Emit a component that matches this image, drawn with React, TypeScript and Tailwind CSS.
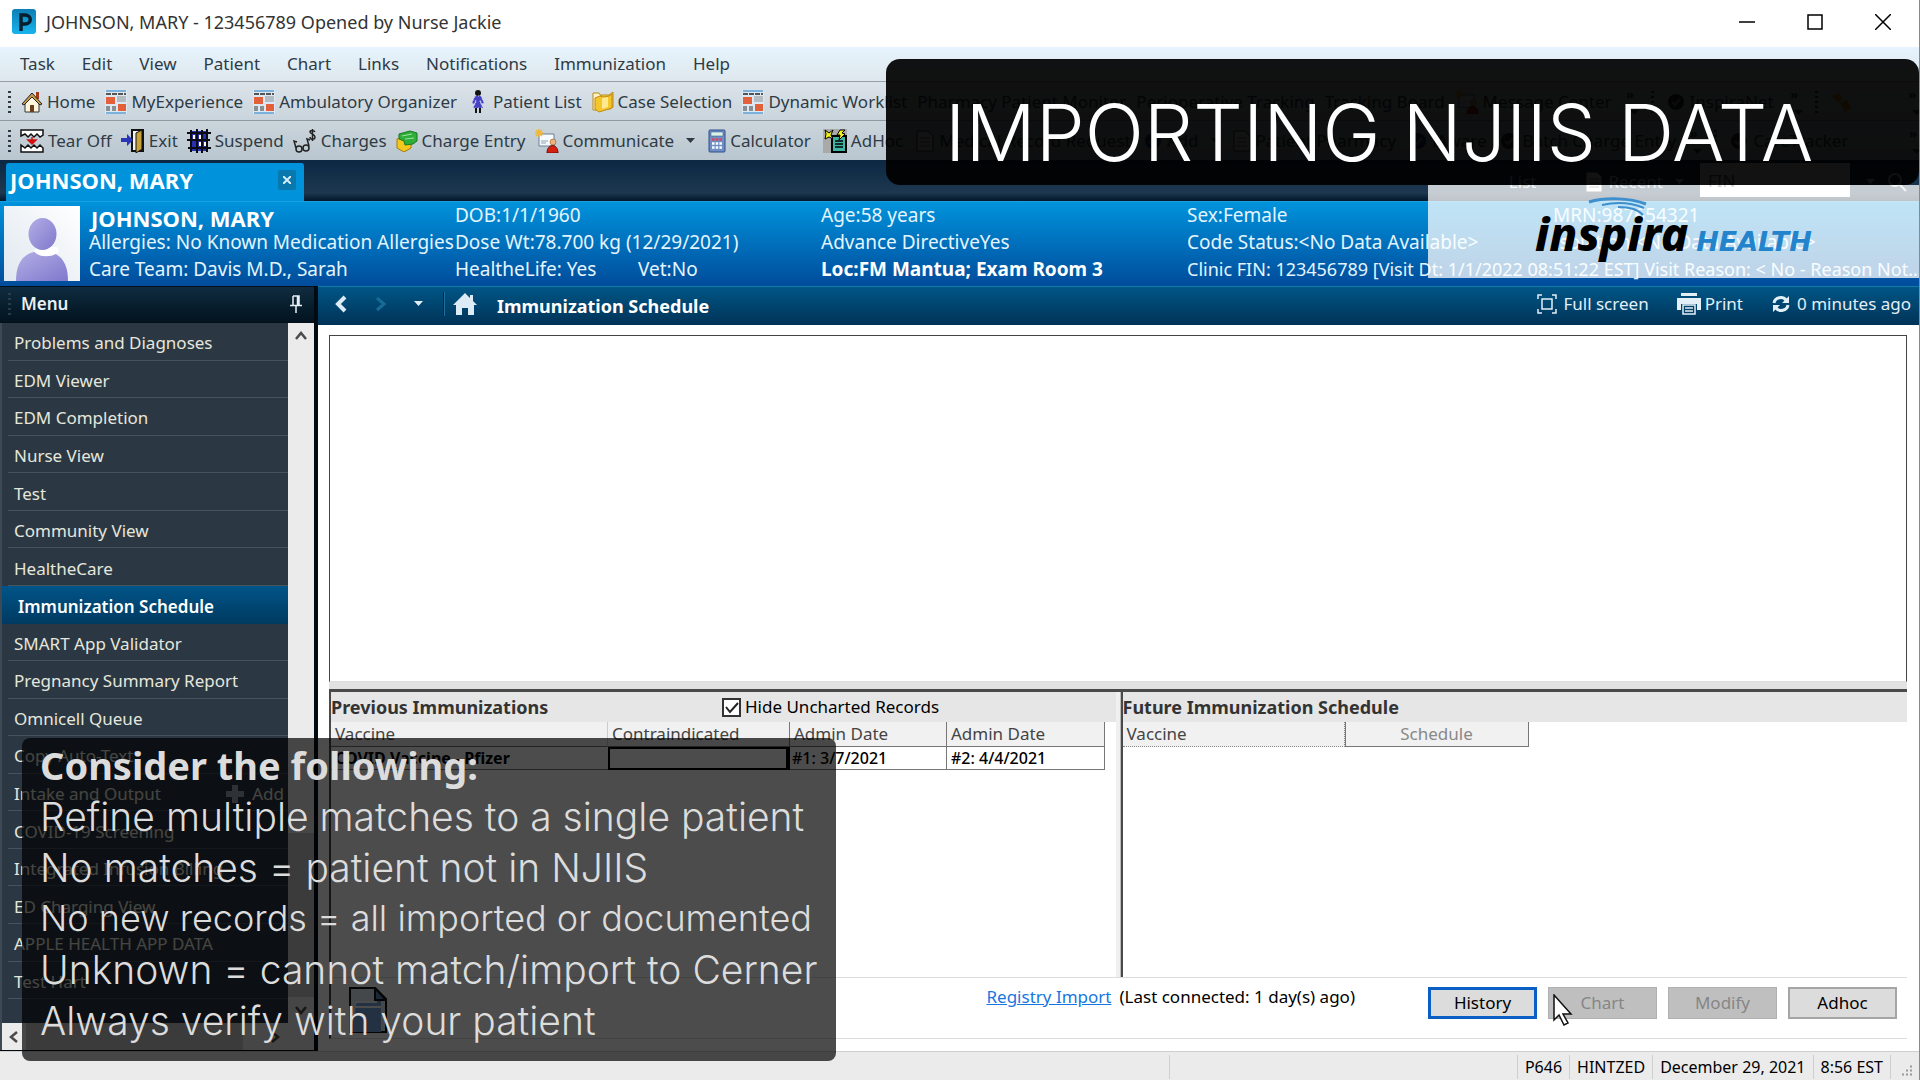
import React, { useState } from "react";

const menus = ["Task", "Edit", "View", "Patient", "Chart", "Links", "Notifications", "Immunization", "Help"];

const sideItems = [
  "Problems and Diagnoses",
  "EDM Viewer",
  "EDM Completion",
  "Nurse View",
  "Test",
  "Community View",
  "HealtheCare",
  "Immunization Schedule",
  "SMART App Validator",
  "Pregnancy Summary Report",
  "Omnicell Queue",
  "Copy Auto-Text",
  "Intake and Output",
  "COVID-19 Screening",
  "Integrated Infusion Billing",
  "ED Charging View",
  "APPLE HEALTH APP DATA",
  "Test Hart",
];

const notes = [
  { text: "Refine multiple matches to a single patient", size: "text-[39px]" },
  { text: "No matches = patient not in NJIIS", size: "text-[39px]" },
  { text: "No new records = all imported or documented", size: "text-[36px]" },
  { text: "Unknown = cannot match/import to Cerner", size: "text-[39px]" },
  { text: "Always verify with your patient", size: "text-[39px]" },
];

const HomeIcon = () => (
  <svg width="22" height="22" viewBox="0 0 22 22">
    <path d="M15 1h3v7h-3z" fill="#a33a1c" />
    <path d="M4 11 11 4l7 7v10H4z" fill="#fdf6dc" stroke="#333" />
    <path d="M1 13 11 2l10 11-2 1-8-8-8 8z" fill="#c99a4a" stroke="#222" strokeWidth="1" />
    <path d="M9 14h4v7H9z" fill="#6b3f1d" />
  </svg>
);

const NewsIcon = () => (
  <svg width="22" height="24" viewBox="0 0 22 24">
    <path d="M0 0h22v24H0z" fill="#dce9f2" />
    <path d="M1 1h20M1 23h20" stroke="#5aa0d6" strokeWidth="1.5" />
    <path d="M1 4h20" stroke="#555" strokeWidth="2" strokeDasharray="5 1" />
    <path d="M1 7h9v7H1zM13 14h8v7h-8z" fill="#e2603a" />
    <path d="M12 7h9M12 9h9M12 11h9" stroke="#8a8f94" />
    <path d="M1 16h4v5H1zM7 16h4v5H7z" fill="#8a8f94" />
  </svg>
);

const PersonIcon = () => (
  <svg width="22" height="24" viewBox="0 0 22 24">
    <circle cx="11" cy="3" r="3" fill="#111" />
    <path d="M8 6h6l3 7-2 1-2-4v2l3 6H6l3-6v-2l-2 4-2-1z" fill="#4543c4" stroke="#c9ccf5" strokeDasharray="1 2" />
    <path d="M9 18v5M13 18v5" stroke="#111" strokeWidth="2" />
  </svg>
);

const FolderIcon = () => (
  <svg width="22" height="22" viewBox="0 0 22 22">
    <path d="M1 2h6l2 3v14H1z" fill="#fff3c4" stroke="#b98a12" />
    <path d="M9 4h8l4-3v15l-3 2H9z" fill="#f7d75a" stroke="#b98a12" />
    <path d="M3 18 7 21 20 17V3l-3 2-6 1-3-1-5 2z" fill="#f5c52c" stroke="#c28b10" />
    <path d="M10 7l6-1v10l-6 2z" fill="#ffe98f" />
  </svg>
);

const TearIcon = () => (
  <svg width="24" height="24" viewBox="0 0 24 24">
    <path d="M1 1h22v5l-3 2-3-3-3 3-3-3-3 3-3-3-4 2zM1 23h22v-4l-3-3-3 3-3-3-3 3-3-3-3 3-4-3z" fill="#fff" stroke="#111" strokeWidth="1.5" />
    <path d="M12 8v3M8 11h8l-4 4z" stroke="#d01010" strokeWidth="1.5" fill="#d01010" />
  </svg>
);

const ExitIcon = () => (
  <svg width="24" height="24" viewBox="0 0 24 24">
    <path d="M11 1h11v21H11z" fill="#f2f2f2" stroke="#111" strokeWidth="2" />
    <path d="M15 4l6-3v19l-6 4z" fill="#c9a23a" stroke="#111" />
    <path d="M0 9h6V5l6 6-6 6v-4H0z" fill="#2a35b8" />
  </svg>
);

const GridIcon = () => (
  <svg width="24" height="24" viewBox="0 0 24 24">
    <path d="M5 2h14v20H5z" fill="#2a2fae" />
    <path d="M7 6v4M13 6v4M13 13v4M18 13v4" stroke="#fff" strokeWidth="2" />
    <path d="M4 1v22M10 0v24M15 1v23M20 0v23M0 4h24M0 11h23M1 19h23" stroke="#0b0b14" strokeWidth="2" />
  </svg>
);

const ChargesIcon = () => (
  <svg width="24" height="24" viewBox="0 0 24 24" fill="none" stroke="#222" strokeWidth="1.5">
    <path d="M22 3c-1-2-5-2-5 0s5 2 5 5-5 3-5 0M19.5 0v12" />
    <circle cx="6" cy="20" r="3" />
    <circle cx="13" cy="19" r="3" />
    <path d="M3 19 1 12l3 1M16 17l-2-7 3 1" />
  </svg>
);

const MoneyIcon = () => (
  <svg width="22" height="22" viewBox="0 0 22 22">
    <path d="M1 9l9-2 5 3v8l-7 4-7-4z" fill="#f4c81d" stroke="#a47a0a" />
    <path d="M3 4 14 1l7 2v8l-4 3-8 1-1-4-5-2z" fill="#2fae3a" stroke="#157a20" />
    <path d="M6 6l10-2M9 9l9-1" stroke="#9be39f" />
  </svg>
);

const MailIcon = () => (
  <svg width="24" height="24" viewBox="0 0 24 24">
    <path d="M4 5h15v12H4z" fill="#f7fbff" stroke="#6b7f99" />
    <path d="M6 12h7M6 14h5" stroke="#8fa1b8" />
    <path d="M4 0v8M0 4h8M1 1l6 6M7 1 1 7" stroke="#f2b632" strokeWidth="1.5" />
    <circle cx="18" cy="13" r="3" fill="#f0b27a" stroke="#7a4a20" strokeWidth=".5" />
    <path d="M12 24c0-10 11-10 11 0z" fill="#d3200f" stroke="#6d0c05" />
  </svg>
);

const CalcIcon = () => (
  <svg width="18" height="24" viewBox="0 0 18 24">
    <rect x="1" y="1" width="16" height="22" rx="1" fill="#6f8fc4" stroke="#2f4f8a" />
    <path d="M3 3h12v4H3z" fill="#d9f2e4" stroke="#2f4f8a" strokeWidth=".5" />
    <path d="M4 10.5h10" stroke="#d8485a" strokeWidth="2.5" strokeDasharray="2.5 1.2" />
    <path d="M4 14.5h10M4 18.5h10" stroke="#fff" strokeWidth="2.5" strokeDasharray="2.5 1.2" />
  </svg>
);

const AdHocIcon = () => (
  <svg width="24" height="24" viewBox="0 0 24 24">
    <path d="M0 0h24v24H0z" fill="#a9a9a9" />
    <path d="M9 7h14v16H9z" fill="#3fb5a4" stroke="#000" strokeWidth="2" />
    <path d="M12 12h8M12 15h8M12 18h8" stroke="#000" strokeWidth="1.5" />
    <path d="M2 1l4 3 4-3-2 5 2 4-4-2-4 2 1-5zM17 1l5 0-3 3 3 1-6 6 1-5-3 0z" fill="#f6f01c" stroke="#000" />
  </svg>
);

const DocIcon = () => (
  <svg width="20" height="22" viewBox="0 0 20 22">
    <path d="M2 1h11l5 5v15H2z" fill="#fff" stroke="#333" />
    <path d="M5 8h10M5 12h10M5 16h10" stroke="#666" />
  </svg>
);

const DotIcon = ({ color }: any) => (
  <svg width="20" height="20" viewBox="0 0 20 20">
    <circle cx="10" cy="10" r="8" fill={color} />
    <path d="M6 10l3 3 5-6" fill="none" stroke="#999" strokeWidth="2" />
  </svg>
);

const Caret = () => (
  <svg width="9" height="6" viewBox="0 0 9 6" className="ml-2">
    <path d="M0 0h9L4.5 5z" fill="currentColor" />
  </svg>
);

const Grip = () => (
  <svg width="3" height="24" viewBox="0 0 3 24" className="shrink-0">
    <path d="M1.5 1v22" stroke="#2d3b47" strokeWidth="3" strokeDasharray="2 3" />
  </svg>
);

const More = () => (
  <span className="flex flex-col items-center justify-between h-7 text-[13px] leading-3 font-bold">
    »<Caret />
  </span>
);

const ToolButton = ({ icon, label, caret }: any) => (
  <button type="button" className="flex items-center gap-1 whitespace-nowrap">
    {icon}
    {label}
    {caret && <Caret />}
  </button>
);

const Toolbars = () => (
  <>
    <section className="h-[39px] flex items-center gap-[10px] pl-2 pt-0.5 border-b border-[#8f9ba4] bg-linear-to-b from-[#dce4ea] to-[#cad4dc]">
      <Grip />
      <ToolButton icon={<HomeIcon />} label="Home" />
      <ToolButton icon={<NewsIcon />} label="MyExperience" />
      <ToolButton icon={<NewsIcon />} label="Ambulatory Organizer" />
      <ToolButton icon={<PersonIcon />} label="Patient List" />
      <ToolButton icon={<FolderIcon />} label="Case Selection" />
      <ToolButton icon={<NewsIcon />} label="Dynamic Worklist" />
      <ToolButton label="Pharmacy Patient Monitor" />
      <ToolButton label="Perioperative Tracking" />
      <ToolButton label="Tracking Board" />
      <ToolButton icon={<MailIcon />} label="Message Center" />
      <div className="ml-auto flex items-center gap-3 pr-1.5">
        <More />
        <Grip />
        <ToolButton icon={<DotIcon color="#333" />} label="InspiraNet" />
        <More />
        <Grip />
        <svg width="22" height="22" viewBox="0 0 22 22" className="mr-10">
          <path d="M2 5l8-3 2 6-4 4zM10 12l7-3 4 8-6 4z" fill="#e58a14" />
        </svg>
        <More />
      </div>
    </section>
    <section className="h-[39px] flex items-center gap-[9px] pl-2 bg-linear-to-b from-[#cbd5dc] to-[#b9c6cf]">
      <Grip />
      <ToolButton icon={<TearIcon />} label="Tear Off" />
      <ToolButton icon={<ExitIcon />} label="Exit" />
      <ToolButton icon={<GridIcon />} label="Suspend" />
      <ToolButton icon={<ChargesIcon />} label="Charges" />
      <ToolButton icon={<MoneyIcon />} label="Charge Entry" />
      <ToolButton icon={<MailIcon />} label="Communicate" caret />
      <div className="flex items-center gap-3 pl-1">
        <ToolButton icon={<CalcIcon />} label="Calculator" />
        <ToolButton icon={<AdHocIcon />} label="AdHoc" />
        <ToolButton icon={<DocIcon />} label="Medical Record Request" />
        <ToolButton icon={<DotIcon color="#27408b" />} label="Add" caret />
        <ToolButton icon={<DocIcon />} label="Patient Pharmacy" />
        <ToolButton icon={<DotIcon color="#27408b" />} label="iAware" />
        <ToolButton icon={<DotIcon color="#333" />} label="Batch Charge Entry" />
      </div>
      <div className="ml-auto flex items-center gap-3 pr-1.5">
        <More />
        <Grip />
        <ToolButton icon={<DotIcon color="#333" />} label="CareTracker" />
        <span className="w-8" />
        <More />
      </div>
    </section>
  </>
);

const TabStrip = () => (
  <section className="h-[41px] flex items-end justify-between pl-1.5 bg-linear-to-b from-[#0b2742] via-[#1d384f] via-80% to-[#04182b]">
    <div className="w-[298px] h-[38px] flex items-center justify-between pl-1 pr-2 pb-1 rounded-t-[3px] bg-[#0092db] text-white">
      <h2 className="text-[22px] leading-8 font-bold">JOHNSON, MARY</h2>
      <button type="button" aria-label="Close chart" className="w-[18px] h-5 flex items-center justify-center rounded-xs bg-[#0878ad]">
        <svg width="8" height="8" viewBox="0 0 8 8">
          <path d="M0 0l8 8M8 0L0 8" stroke="#d5ecf8" strokeWidth="2" />
        </svg>
      </button>
    </div>
    <div className="h-[38px] flex items-center pr-3 text-[#d5dde5]">
      <a href="#list" className="mr-12">List</a>
      <ToolButton icon={<DocIcon />} label="Recent" caret />
      <input aria-label="Patient search" defaultValue="FIN" className="w-[150px] h-[34px] ml-4 mb-1 px-2 bg-white text-[#555]" />
      <span className="ml-2"><Caret /></span>
      <svg width="20" height="20" viewBox="0 0 20 20" className="ml-3">
        <circle cx="8" cy="8" r="6" fill="none" stroke="#cfd8e0" strokeWidth="2" />
        <path d="M12 12l7 7" stroke="#cfd8e0" strokeWidth="2" />
      </svg>
    </div>
  </section>
);

const Banner = () => (
  <section className="h-[85px] flex border-t border-[#1aa0e0] bg-linear-to-b from-[#0093dc] to-[#004c9b] text-[#e4f5ff] text-[19px] leading-[27px] whitespace-nowrap">
    <div className="w-[89px] shrink-0 pl-1 pt-1">
      <svg width="76" height="75" viewBox="0 0 76 75">
        <defs>
          <linearGradient id="pic" x1="0" y1="1" x2="1" y2="0">
            <stop offset="0" stopColor="#dfe7ef" />
            <stop offset="1" stopColor="#ffffff" />
          </linearGradient>
          <linearGradient id="body" x1="0" y1="0" x2="1" y2="1">
            <stop offset="0" stopColor="#b3aee6" />
            <stop offset="1" stopColor="#7f78cc" />
          </linearGradient>
        </defs>
        <path d="M0 0h76v75H0z" fill="url(#pic)" />
        <path d="M12 75c0-15 5-26 18-29h16c13 3 18 14 18 29z" fill="url(#body)" />
        <path d="M30 45c3 7 21 7 25 0l-2-4H33z" fill="#fff" />
        <ellipse cx="38.5" cy="28" rx="14" ry="16" fill="url(#body)" />
      </svg>
    </div>
    <div className="flex-1 min-w-0 grid grid-cols-5 content-start">
      <h1 className="h-[27px] leading-[32px] pl-0.5 text-[22px] font-bold text-white">JOHNSON, MARY</h1>
      <p>DOB:1/1/1960</p>
      <p>Age:58 years</p>
      <p>Sex:Female</p>
      <p>MRN:987654321</p>
      <p>Allergies: No Known Medication Allergies</p>
      <p>Dose Wt:78.700 kg (12/29/2021)</p>
      <p>Advance DirectiveYes</p>
      <p>Code Status:&lt;No Data Available&gt;</p>
      <p>Isolation:&lt;No Data Available&gt;</p>
      <p>Care Team: Davis M.D., Sarah</p>
      <p className="grid grid-cols-2"><span>HealtheLife: Yes</span><span>Vet:No</span></p>
      <p className="font-bold text-white">Loc:FM Mantua; Exam Room 3</p>
      <p className="col-span-2 text-lg leading-[27px]">Clinic FIN: 123456789 [Visit Dt: 1/1/2022 08:51:22 EST] Visit Reason: &lt; No - Reason Not…</p>
    </div>
  </section>
);

const Chevron = ({ d }: any) => (
  <svg width="12" height="12" viewBox="0 0 12 12" fill="none" stroke="#4a4a4a" strokeWidth="2.5">
    <path d={d} />
  </svg>
);

const Sidebar = ({ active, setActive }: any) => (
  <aside className="w-[318px] shrink-0 flex flex-col border-r-4 border-b border-[#020a12] bg-[#2b3843]">
    <header className="h-[37px] flex items-center gap-2.5 pl-2 pr-3 pb-0.5 border-y border-y-[#03101b] bg-linear-to-b from-[#102c40] to-[#03131f] text-[#e8f0f6]">
      <Grip />
      <h2 className="flex-1 font-semibold">Menu</h2>
      <svg width="12" height="18" viewBox="0 0 12 18" fill="none" stroke="#e8f0f6" strokeWidth="1.5">
        <path d="M3 1h6v9M3 1v9M7.5 1v9M0 10.5h12M6 11v7" />
      </svg>
    </header>
    <div className="flex-1 flex">
      <ul className="flex-1 flex flex-col pb-6 border-l-2 border-[#3d4a55]">
        {sideItems.map((item) => (
          <li key={item} className="flex-1 flex">
            {item === active ? (
              <a href="#active" className="flex-1 flex items-center pl-4 pt-1 font-semibold text-white bg-linear-to-b from-[#005488] to-[#003a61]">{item}</a>
            ) : (
              <a href="#view" onClick={() => setActive(item)} className="flex-1 flex items-center justify-between ml-1.5 pl-1.5 pr-1 pt-1 border-b border-[#45535f] text-[#e6e6dc]">
                {item}
                {item === "Intake and Output" && (
                  <span className="flex items-center gap-2">
                    <svg width="18" height="18" viewBox="0 0 18 18"><path d="M9 0v18M0 9h18" stroke="#9aa9b8" strokeWidth="6" /></svg>
                    Add
                  </span>
                )}
              </a>
            )}
          </li>
        ))}
      </ul>
      <div className="w-[26px] flex flex-col items-center bg-[#ebebeb]">
        <div className="h-[26px] flex items-center"><Chevron d="M1 9l5-6 5 6" /></div>
        <div className="mt-auto w-full h-[164px] bg-[#c6c6c6]" />
        <div className="h-[26px] flex items-center"><Chevron d="M1 3l5 6 5-6" /></div>
      </div>
    </div>
    <div className="h-[27px] flex items-center border-l-2 border-[#3d4a55] bg-[#ebebeb]">
      <div className="w-6 flex justify-center"><Chevron d="M9 1L3 6l6 5" /></div>
      <div className="w-[217px] h-full bg-[#c6c6c6]" />
      <div className="ml-auto mr-[33px]"><Chevron d="M3 1l6 5-6 5" /></div>
    </div>
  </aside>
);

const NavBar = () => (
  <header className="h-[39px] flex items-center pl-4 pr-2 pb-1 border-t border-[#0d7ba6] bg-linear-to-b from-[#005687] to-[#003357] text-[#e3eff7]">
    <button type="button" aria-label="Back">
      <svg width="13" height="18" viewBox="0 0 13 18" fill="none" stroke="#dcebf5" strokeWidth="4"><path d="M11 2L4 9l7 7" /></svg>
    </button>
    <button type="button" aria-label="Forward" className="ml-7">
      <svg width="13" height="16" viewBox="0 0 13 16" fill="none" stroke="#176c97" strokeWidth="3"><path d="M2 2l7 6-7 6" /></svg>
    </button>
    <button type="button" aria-label="History list" className="ml-[18px] mr-5"><Caret /></button>
    <span className="w-0.5 h-6 bg-[#002a48] border-r border-[#1d6f9e]" />
    <svg width="24" height="22" viewBox="0 0 24 22" className="ml-2 text-[#dcebf5]">
      <path d="M12 0l5 5V2h3v6l4 4h-3v10h-6v-7H9v7H3V12H0z" fill="currentColor" />
    </svg>
    <h2 className="ml-5 pt-1 flex-1 text-lg font-bold text-white">Immunization Schedule</h2>
    <button type="button" className="flex items-center gap-1.5">
      <svg width="20" height="20" viewBox="0 0 20 20" fill="none" stroke="currentColor" strokeWidth="1.5">
        <path d="M1 5V1h4M15 1h4v4M19 15v4h-4M5 19H1v-4M5 5h10v10H5z" />
      </svg>
      Full screen
    </button>
    <button type="button" className="ml-7 flex items-center gap-1">
      <svg width="24" height="22" viewBox="0 0 24 22" fill="currentColor">
        <path d="M4 0h16v3H4zM0 5h24v12h-4v-6H4v6H0z" />
        <path d="M6 12h12v9H6z" fill="none" stroke="currentColor" strokeWidth="1.5" />
        <path d="M8 15h8M8 18h8" stroke="currentColor" strokeWidth="1.5" />
      </svg>
      Print
    </button>
    <button type="button" className="ml-7 flex items-center gap-1.5">
      <svg width="20" height="18" viewBox="0 0 20 18" fill="none" stroke="currentColor" strokeWidth="3">
        <path d="M3 8c1-6 9-7 12-3M17 10c-1 6-9 7-12 3" />
        <path d="M18 1v7h-7zM2 17v-7h7z" fill="currentColor" stroke="none" />
      </svg>
      0 minutes ago
    </button>
  </header>
);

const Previous = () => {
  const [hide, setHide] = useState(true);
  return (
    <section className="flex-1 min-w-0 border-l-2 border-[#4a4a4a]">
      <div className="h-[30px] flex items-center bg-[#e6e6e6]">
        <h3 className="w-[391px] text-lg font-bold text-[#333]">Previous Immunizations</h3>
        <label className="flex items-center gap-1 text-black">
          <span className="relative flex">
            <input type="checkbox" checked={hide} onChange={() => setHide(!hide)} className="appearance-none w-[19px] h-[19px] border-2 border-[#333] bg-white" />
            {hide && <svg viewBox="0 0 19 19" className="absolute inset-0 pointer-events-none"><path d="M4 9l4 5 8-9" fill="none" stroke="#222" strokeWidth="2" /></svg>}
          </span>
          Hide Uncharted Records
        </label>
      </div>
      <table className="w-[774px] table-fixed border-separate border-spacing-0 text-left">
        <colgroup>
          <col className="w-[277px]" />
          <col className="w-[182px]" />
          <col className="w-[157px]" />
          <col className="w-[158px]" />
        </colgroup>
        <thead className="bg-[#f1f1f1] text-[#444] leading-6">
          <tr>
            <th className="pl-1 font-normal border-b border-[#777] border-r border-r-[#ccc]">Vaccine</th>
            <th className="pl-1 font-normal border-b border-r border-[#777]">Contraindicated</th>
            <th className="pl-1 font-normal border-b border-r border-[#777]">Admin Date</th>
            <th className="pl-1 font-normal border-b border-r border-[#777]">Admin Date</th>
          </tr>
        </thead>
        <tbody className="text-base leading-[22px] text-black">
          <tr>
            <td className="pl-1 font-bold border-b border-[#777]">COVID Vaccine - Pfizer</td>
            <td className="border-2 border-r-4 border-black" />
            <td className="pl-0.5 font-medium border-b border-r border-[#777]">#1: 3/7/2021</td>
            <td className="pl-1 font-medium border-b border-r border-[#777]">#2: 4/4/2021</td>
          </tr>
        </tbody>
      </table>
    </section>
  );
};

const Future = () => (
  <section className="flex-1 min-w-0 border-l-2 border-[#4a4a4a]">
    <h3 className="h-[30px] leading-[30px] text-lg font-bold text-[#333] bg-[#e6e6e6]">Future Immunization Schedule</h3>
    <table className="w-[406px] table-fixed border-separate border-spacing-0 bg-[#f1f1f1] text-[#444] leading-6">
      <thead>
        <tr>
          <th className="w-[222px] pl-1 text-left font-normal border-b border-r border-dotted border-[#888]">Vaccine</th>
          <th className="font-normal text-[#888] border-l border-b border-r border-[#777]">Schedule</th>
        </tr>
      </thead>
    </table>
  </section>
);

const Footer = () => (
  <footer className="h-[62px] flex items-start pt-[9px] pr-2.5 border-l-2 border-l-[#4a4a4a] border-y border-y-[#ddd] text-black">
    <svg width="38" height="46" viewBox="0 0 38 46" className="ml-[18px]">
      <path d="M1 1h25l11 11v33H1z" fill="#e8f0fa" stroke="#111" strokeWidth="2" />
      <path d="M8 14h24v31H2z" fill="#7aa3dd" />
      <path d="M26 1v12h11z" fill="#5b7fb8" stroke="#111" strokeWidth="2" />
      <path d="M6 15h22M6 20h26" stroke="#fff" strokeWidth="2" />
    </svg>
    <p className="ml-auto mr-[73px] flex gap-2 leading-5">
      <a href="#registry" className="underline text-[#1777e0]">Registry Import</a>
      <span>(Last connected: 1 day(s) ago)</span>
    </p>
    <div className="flex gap-[11px] leading-5">
      <button type="button" className="w-[109px] h-8 border-[3px] border-[#0a5fc4] bg-[#dcdcdc]">History</button>
      <button type="button" disabled className="relative w-[109px] h-8 border border-[#b0b0b0] bg-[#bfbfbf] text-[#868686]">
        Chart
        <svg width="20" height="32" viewBox="0 0 20 32" className="absolute left-1 top-1.5">
          <path d="M1 1v25l5-5 5 10 4-2-5-9h8z" fill="#fff" stroke="#111" strokeWidth="1.5" />
        </svg>
      </button>
      <button type="button" disabled className="w-[109px] h-8 border border-[#b0b0b0] bg-[#bfbfbf] text-[#868686]">Modify</button>
      <button type="button" className="w-[109px] h-8 border-2 border-[#a5a5a5] bg-[#dcdcdc]">Adhoc</button>
    </div>
  </footer>
);

const StatusBar = () => (
  <footer className="h-[29px] flex items-center justify-end pt-0.5 border-t border-[#cfcfcf] bg-[#ebebeb] text-black text-base leading-6">
    <span className="w-[348px] h-6 border-l border-[#cfcfcf]" />
    <span className="px-[7px] border-l border-[#cfcfcf]">P646</span>
    <span className="px-[7px] border-l border-[#cfcfcf]">HINTZED</span>
    <span className="px-[7px] border-l border-[#cfcfcf]">December 29, 2021</span>
    <span className="px-[7px] border-x border-[#cfcfcf]">8:56 EST</span>
    <svg width="14" height="14" viewBox="0 0 14 14" className="ml-2.5 mr-1 self-end mb-1">
      <path d="M1 12.5h12M5 8.5h8M9 4.5h4" stroke="#999" strokeWidth="2" strokeDasharray="2 2" />
    </svg>
  </footer>
);

export default function App() {
  const [active, setActive] = useState("Immunization Schedule");

  return (
    <div className="relative min-h-screen flex flex-col overflow-hidden border-r border-[#19b5d8] bg-white font-['Noto_Sans',sans-serif] text-[17px] leading-6 text-[#2e3b45]">
      <header className="h-[47px] flex items-center pl-3 pr-7 pb-1 bg-white">
        <svg width="24" height="25" viewBox="0 0 24 25">
          <defs>
            <linearGradient id="app" x1="0" y1="0" x2="0" y2="1">
              <stop offset="0" stopColor="#0d7fb5" />
              <stop offset="1" stopColor="#18b4ee" />
            </linearGradient>
          </defs>
          <rect width="24" height="25" rx="3" fill="url(#app)" />
          <path d="M9 22V6h4c7 0 7 9 0 9H9" fill="none" stroke="#04202f" strokeWidth="3.5" />
        </svg>
        <p className="ml-2.5 flex-1 text-lg text-[#333]">JOHNSON, MARY - 123456789 Opened by Nurse Jackie</p>
        <div className="flex items-center gap-[52px]">
          <button type="button" aria-label="Minimize"><svg width="16" height="16" viewBox="0 0 16 16" stroke="#000" strokeWidth="1.5"><path d="M0 8h16" /></svg></button>
          <button type="button" aria-label="Maximize"><svg width="16" height="16" viewBox="0 0 16 16" stroke="#000" strokeWidth="1.5" fill="none"><path d="M1 1h14v14H1z" /></svg></button>
          <button type="button" aria-label="Close"><svg width="16" height="16" viewBox="0 0 16 16" stroke="#000" strokeWidth="1.5"><path d="M0 0l16 16M16 0L0 16" /></svg></button>
        </div>
      </header>
      <nav className="h-[35px] flex items-center gap-[27px] pl-5 border-b border-[#94a1aa] bg-linear-to-b from-[#e6f4fd] to-[#dfe7ed]">
        {menus.map((m) => (
          <button type="button" key={m}>{m}</button>
        ))}
      </nav>
      <Toolbars />
      <TabStrip />
      <Banner />
      <div className="flex-1 flex">
        <Sidebar active={active} setActive={setActive} />
        <main className="flex-1 min-w-0 flex flex-col">
          <NavBar />
          <div className="flex-1 flex flex-col pl-[11px] pr-3 pt-2.5 pb-3">
            <div className="h-[347px] border border-[#444] border-b-[#ddd]" />
            <div className="h-[7px] bg-[#e2e2e2] border-b-3 border-[#4a4a4a] box-content" />
            <div className="flex-1 flex">
              <Previous />
              <div className="w-[5px] bg-[#f0f0f0] border-r border-[#bbb]" />
              <Future />
            </div>
            <Footer />
          </div>
        </main>
      </div>
      <StatusBar />

      {/* captions on top of the window */}
      <div className="absolute top-[185px] right-0 w-[491px] h-[93px] bg-white/75">
        <div className="flex items-baseline gap-2 pl-[107px] pt-[18px] whitespace-nowrap italic">
          <span className="text-[46px] leading-[60px] font-extrabold text-black">inspira</span>
          <span className="font-['DejaVu_Sans',sans-serif] text-[27px] font-bold text-[#2384cc]">HEALTH</span>
        </div>
        <svg width="60" height="20" viewBox="0 0 60 20" fill="none" stroke="#3d8fce" className="absolute left-40 top-3">
          <path d="M1 5C18 0 42 1 58 7" strokeWidth="3" />
          <path d="M14 8c14-3 30-2 42 3" strokeWidth="2" />
          <path d="M30 10c10 0 20 2 25 8" strokeWidth="2" />
        </svg>
      </div>
      <div className="absolute top-[59px] right-0 left-[886px] h-[126px] pl-[59px] rounded-[14px] bg-black/93">
        <p className="font-[Inter,sans-serif] font-light text-[78px] leading-[148px] text-white whitespace-nowrap">IMPORTING NJIIS DATA</p>
      </div>
      <section className="absolute left-[22px] bottom-[19px] w-[814px] h-[323px] pl-[18px] pt-0.5 rounded-lg bg-black/70 text-[#dcdcdc] whitespace-nowrap">
        <h2 className="text-[38px] leading-[51px] font-bold">Consider the following:</h2>
        <ul className="font-[Inter,sans-serif] font-light">
          {notes.map((n) => (
            <li key={n.text} className={n.size + " leading-[51px]"}>{n.text}</li>
          ))}
        </ul>
      </section>
    </div>
  );
}
